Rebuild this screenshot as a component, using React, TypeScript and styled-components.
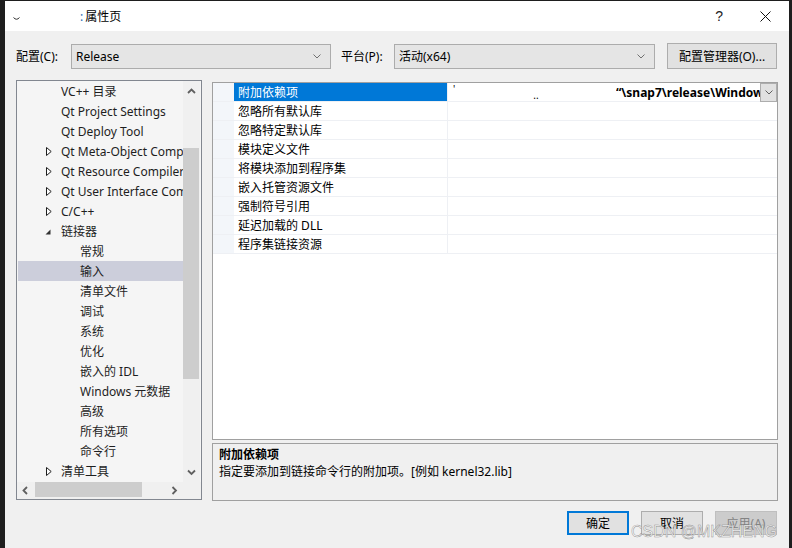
import React from "react";
import styled, { createGlobalStyle, css } from "styled-components";

const UI_FONT = `"Segoe UI", "Noto Sans", "Noto Sans CJK SC", sans-serif`;

const GlobalStyle = createGlobalStyle`
  html, body {
    margin: 0;
    padding: 0;
    background: #1e1e1e;
    overflow: hidden;
  }
  * { box-sizing: border-box; }
`;

const Page = styled.div`
  position: relative;
  width: 792px;
  height: 548px;
  padding: 1px 3px 0 5px;
  background: #1e1e1e;
  font-family: ${UI_FONT};
  font-size: 12px;
  color: #000;
`;

const Window = styled.div`
  height: 100%;
  display: flex;
  flex-direction: column;
  background: #f0f0f0;
`;

/* ---------- title bar ---------- */
const TitleBar = styled.div`
  height: 30px;
  flex: none;
  display: flex;
  align-items: center;
  background: #fff;
  padding: 0 18px 0 8px;
`;

const AppMark = styled.svg`
  width: 7px;
  height: 4px;
  margin-top: 6px;
`;

const TitleText = styled.span`
  margin-left: 60px;
  font-size: 12px;
  color: #000;
`;

const TitleColon = styled.span`
  color: #2a6db5;
  margin-right: 2px;
`;

const HelpGlyph = styled.span`
  margin-left: auto;
  font-family: "Liberation Sans", sans-serif;
  font-size: 14px;
  color: #222;
  margin-right: 37px;
`;

const CloseGlyph = styled.svg`
  width: 11px;
  height: 11px;
`;

/* ---------- client area ---------- */
const Client = styled.div`
  flex: 1;
  display: flex;
  flex-direction: column;
  padding: 12px 12px 0 11px;
`;

const ConfigRow = styled.div`
  height: 26px;
  display: flex;
  align-items: center;
`;

const FieldLabel = styled.span<{ $w: number; $gap?: number }>`
  width: ${(p) => p.$w}px;
  margin-left: ${(p) => p.$gap ?? 0}px;
  flex: none;
  white-space: nowrap;
`;

const SelectBox = styled.div<{ $w: number }>`
  width: ${(p) => p.$w}px;
  height: 25px;
  flex: none;
  display: flex;
  align-items: center;
  justify-content: space-between;
  padding: 0 9px 0 4px;
  background: #e5e5e5;
  border: 1px solid #acacac;
`;

const Chevron = styled.svg`
  width: 8px;
  height: 5px;
`;

const PushButton = styled.div<{ $w: number; $variant?: "default" | "primary" | "disabled" }>`
  width: ${(p) => p.$w}px;
  height: 24px;
  flex: none;
  display: flex;
  align-items: center;
  justify-content: center;
  background: #e1e1e1;
  border: 1px solid #adadad;
  white-space: nowrap;
  ${(p) =>
    p.$variant === "primary" &&
    css`
      border: 2px solid #0078d7;
    `}
  ${(p) =>
    p.$variant === "disabled" &&
    css`
      background: #cccccc;
      border-color: #bfbfbf;
      color: #838383;
    `}
`;

const ManagerButton = styled(PushButton)`
  height: 26px;
  margin-left: 12px;
`;

const Main = styled.div`
  margin-top: 11px;
  display: flex;
  gap: 10px;
`;

/* ---------- tree ---------- */
const TreePanel = styled.div`
  width: 186px;
  height: 420px;
  flex: none;
  display: flex;
  flex-direction: column;
  border: 1px solid #828790;
  background: #f5f5f5;
`;

const TreeBody = styled.div`
  height: 401px;
  display: flex;
`;

const TreeList = styled.div`
  width: 166px;
  flex: none;
  overflow: hidden;
  background: #f5f5f5;
`;

const TreeRow = styled.div<{ $level: number; $selected?: boolean }>`
  height: 20px;
  display: flex;
  align-items: center;
  white-space: nowrap;
  margin-left: 1px;
  padding-left: ${(p) => (p.$level === 1 ? 28 : 62)}px;
  background: ${(p) => (p.$selected ? "#cccedb" : "transparent")};
  color: #1e1e1e;
`;

const Expander = styled.span`
  width: 15px;
  flex: none;
  display: flex;
  align-items: center;
`;

const VScroll = styled.div`
  width: 17px;
  flex: none;
  display: flex;
  flex-direction: column;
  background: #f0f0f0;
`;

const ScrollArrow = styled.div<{ $h?: number; $w?: number }>`
  height: ${(p) => p.$h ?? 17}px;
  width: ${(p) => p.$w ?? 17}px;
  flex: none;
  display: flex;
  align-items: center;
  justify-content: center;
`;

const VTrack = styled.div`
  flex: 1;
  display: flex;
  flex-direction: column;
  align-items: flex-start;
`;

const VThumb = styled.div`
  margin-top: 47px;
  width: 16px;
  height: 231px;
  background: #cdcdcd;
`;

const HScroll = styled.div`
  height: 17px;
  display: flex;
  background: #f0f0f0;
`;

const HTrack = styled.div`
  width: 132px;
  display: flex;
  align-items: flex-start;
`;

const HThumb = styled.div`
  margin-left: 1px;
  width: 107px;
  height: 15px;
  background: #cdcdcd;
`;

const Corner = styled.div`
  flex: 1;
  background: #f0f0f0;
`;

/* ---------- property grid ---------- */
const RightColumn = styled.div`
  width: 566px;
  flex: none;
  padding-top: 2px;
  display: flex;
  flex-direction: column;
  gap: 3px;
`;

const Grid = styled.div`
  height: 358px;
  border: 1px solid #a0a0a0;
  background: #fff;
  overflow: hidden;
`;

const GridRow = styled.div`
  height: 19px;
  display: flex;
  border-bottom: 1px solid #eef0f4;
`;

const Gutter = styled.div`
  width: 21px;
  flex: none;
  background: #f3f6fa;
`;

const NameCell = styled.div<{ $selected?: boolean }>`
  width: 214px;
  flex: none;
  display: flex;
  align-items: center;
  padding-left: 4px;
  border-right: 1px solid #eef0f4;
  white-space: nowrap;
  ${(p) =>
    p.$selected &&
    css`
      background: #0078d7;
      color: #fff;
    `}
`;

const ValueCell = styled.div`
  flex: 1;
  display: flex;
  align-items: center;
  padding-left: 5px;
  min-width: 0;
`;

const Tick = styled.span`
  align-self: flex-start;
  font-size: 10px;
  line-height: 12px;
`;

const Dots = styled.span`
  align-self: flex-end;
  margin-left: 78px;
  font-size: 10px;
  line-height: 12px;
`;

const ValueText = styled.span`
  margin-left: auto;
  width: 144px;
  overflow: hidden;
  white-space: nowrap;
  font-weight: 700;
`;

const DropButton = styled.div`
  width: 17px;
  height: 19px;
  flex: none;
  display: flex;
  align-items: center;
  justify-content: center;
  background: #e1e1e1;
  border: 1px solid #adadad;
`;

const DescPanel = styled.div`
  height: 58px;
  border: 1px solid #a0a0a0;
  padding: 2px 6px;
  line-height: 17px;
`;

const DescTitle = styled.div`
  font-weight: 700;
`;

const ButtonRow = styled.div`
  margin-top: 10px;
  display: flex;
  justify-content: flex-end;
  gap: 12px;
`;

const Watermark = styled.div`
  position: absolute;
  left: 631px;
  top: 523px;
  font-family: "Liberation Sans", sans-serif;
  font-size: 16px;
  line-height: 18px;
  color: rgba(255, 255, 255, 0.9);
  -webkit-text-stroke: 0.5px rgba(110, 110, 110, 0.75);
  pointer-events: none;
  white-space: nowrap;
`;

/* ---------- small drawings ---------- */
const ChevronDown = ({ color = "#707070" }: { color?: string }) => (
  <Chevron viewBox="0 0 8 5">
    <polyline points="0.5,0.5 4,4 7.5,0.5" fill="none" stroke={color} strokeWidth="1" />
  </Chevron>
);

const ScrollChevron = ({ dir }: { dir: "up" | "down" | "left" | "right" }) => {
  const pts = {
    up: "1,5 4.5,1.5 8,5",
    down: "1,1.5 4.5,5 8,1.5",
    left: "5,1 1.5,4.5 5,8",
    right: "1.5,1 5,4.5 1.5,8",
  }[dir];
  const vertical = dir === "up" || dir === "down";
  return (
    <svg width={vertical ? 9 : 7} height={vertical ? 7 : 9} viewBox={vertical ? "0 0 9 7" : "0 0 7 9"}>
      <polyline points={pts} fill="none" stroke="#606060" strokeWidth="1.8" />
    </svg>
  );
};

const Collapsed = () => (
  <svg width="6" height="9" viewBox="0 0 6 9">
    <path d="M0.5 0.5 L5.2 4.5 L0.5 8.5 Z" fill="#fff" stroke="#1e1e1e" strokeWidth="1" />
  </svg>
);

const ExpandedMark = () => (
  <svg width="6" height="6" viewBox="0 0 6 6" style={{ marginLeft: -1, marginTop: 2 }}>
    <path d="M5.5 0.5 L5.5 5.5 L0.5 5.5 Z" fill="#333" />
  </svg>
);

type TreeItem = { label: string; level: 1 | 2; exp?: "closed" | "open"; selected?: boolean };

const tree: TreeItem[] = [
  { label: "VC++ 目录", level: 1 },
  { label: "Qt Project Settings", level: 1 },
  { label: "Qt Deploy Tool", level: 1 },
  { label: "Qt Meta-Object Compiler", level: 1, exp: "closed" },
  { label: "Qt Resource Compiler", level: 1, exp: "closed" },
  { label: "Qt User Interface Compiler", level: 1, exp: "closed" },
  { label: "C/C++", level: 1, exp: "closed" },
  { label: "链接器", level: 1, exp: "open" },
  { label: "常规", level: 2 },
  { label: "输入", level: 2, selected: true },
  { label: "清单文件", level: 2 },
  { label: "调试", level: 2 },
  { label: "系统", level: 2 },
  { label: "优化", level: 2 },
  { label: "嵌入的 IDL", level: 2 },
  { label: "Windows 元数据", level: 2 },
  { label: "高级", level: 2 },
  { label: "所有选项", level: 2 },
  { label: "命令行", level: 2 },
  { label: "清单工具", level: 1, exp: "closed" },
];

const properties = [
  "附加依赖项",
  "忽略所有默认库",
  "忽略特定默认库",
  "模块定义文件",
  "将模块添加到程序集",
  "嵌入托管资源文件",
  "强制符号引用",
  "延迟加载的 DLL",
  "程序集链接资源",
];

export default function App() {
  return (
    <Page>
      <GlobalStyle />
      <Window>
        <TitleBar>
          <AppMark viewBox="0 0 7 4">
            <path d="M0.5 0.5 Q3.5 4 6.5 0.5" fill="none" stroke="#333" strokeWidth="1" />
          </AppMark>
          <TitleText>
            <TitleColon>:</TitleColon>属性页
          </TitleText>
          <HelpGlyph>?</HelpGlyph>
          <CloseGlyph viewBox="0 0 11 11">
            <path d="M0.5 0.5 L10.5 10.5 M10.5 0.5 L0.5 10.5" stroke="#111" strokeWidth="1" />
          </CloseGlyph>
        </TitleBar>

        <Client>
          <ConfigRow>
            <FieldLabel $w={55}>配置(C):</FieldLabel>
            <SelectBox $w={260}>
              <span>Release</span>
              <ChevronDown />
            </SelectBox>
            <FieldLabel $w={53} $gap={10}>
              平台(P):
            </FieldLabel>
            <SelectBox $w={261}>
              <span>活动(x64)</span>
              <ChevronDown />
            </SelectBox>
            <ManagerButton $w={110}>配置管理器(O)...</ManagerButton>
          </ConfigRow>

          <Main>
            <TreePanel>
              <TreeBody>
                <TreeList>
                  {tree.map((item) => (
                    <TreeRow key={item.label} $level={item.level} $selected={item.selected}>
                      {item.level === 1 && (
                        <Expander>
                          {item.exp === "closed" && <Collapsed />}
                          {item.exp === "open" && <ExpandedMark />}
                        </Expander>
                      )}
                      {item.label}
                    </TreeRow>
                  ))}
                </TreeList>
                <VScroll>
                  <ScrollArrow $h={20}>
                    <ScrollChevron dir="up" />
                  </ScrollArrow>
                  <VTrack>
                    <VThumb />
                  </VTrack>
                  <ScrollArrow $h={19}>
                    <ScrollChevron dir="down" />
                  </ScrollArrow>
                </VScroll>
              </TreeBody>
              <HScroll>
                <ScrollArrow>
                  <ScrollChevron dir="left" />
                </ScrollArrow>
                <HTrack>
                  <HThumb />
                </HTrack>
                <ScrollArrow>
                  <ScrollChevron dir="right" />
                </ScrollArrow>
                <Corner />
              </HScroll>
            </TreePanel>

            <RightColumn>
              <Grid>
                {properties.map((name, i) => (
                  <GridRow key={name}>
                    <Gutter />
                    <NameCell $selected={i === 0}>{name}</NameCell>
                    <ValueCell>
                      {i === 0 && (
                        <>
                          <Tick>'</Tick>
                          <Dots>..</Dots>
                          <ValueText>“\snap7\release\Windows\Win64\snap7.lib</ValueText>
                          <DropButton>
                            <ChevronDown color="#606060" />
                          </DropButton>
                        </>
                      )}
                    </ValueCell>
                  </GridRow>
                ))}
              </Grid>
              <DescPanel>
                <DescTitle>附加依赖项</DescTitle>
                <div>指定要添加到链接命令行的附加项。[例如 kernel32.lib]</div>
              </DescPanel>
            </RightColumn>
          </Main>

          <ButtonRow>
            <PushButton $w={62} $variant="primary">确定</PushButton>
            <PushButton $w={62}>取消</PushButton>
            <PushButton $w={62} $variant="disabled">应用(A)</PushButton>
          </ButtonRow>
        </Client>
      </Window>
      <Watermark>CSDN @MKZHENG</Watermark>
    </Page>
  );
}
